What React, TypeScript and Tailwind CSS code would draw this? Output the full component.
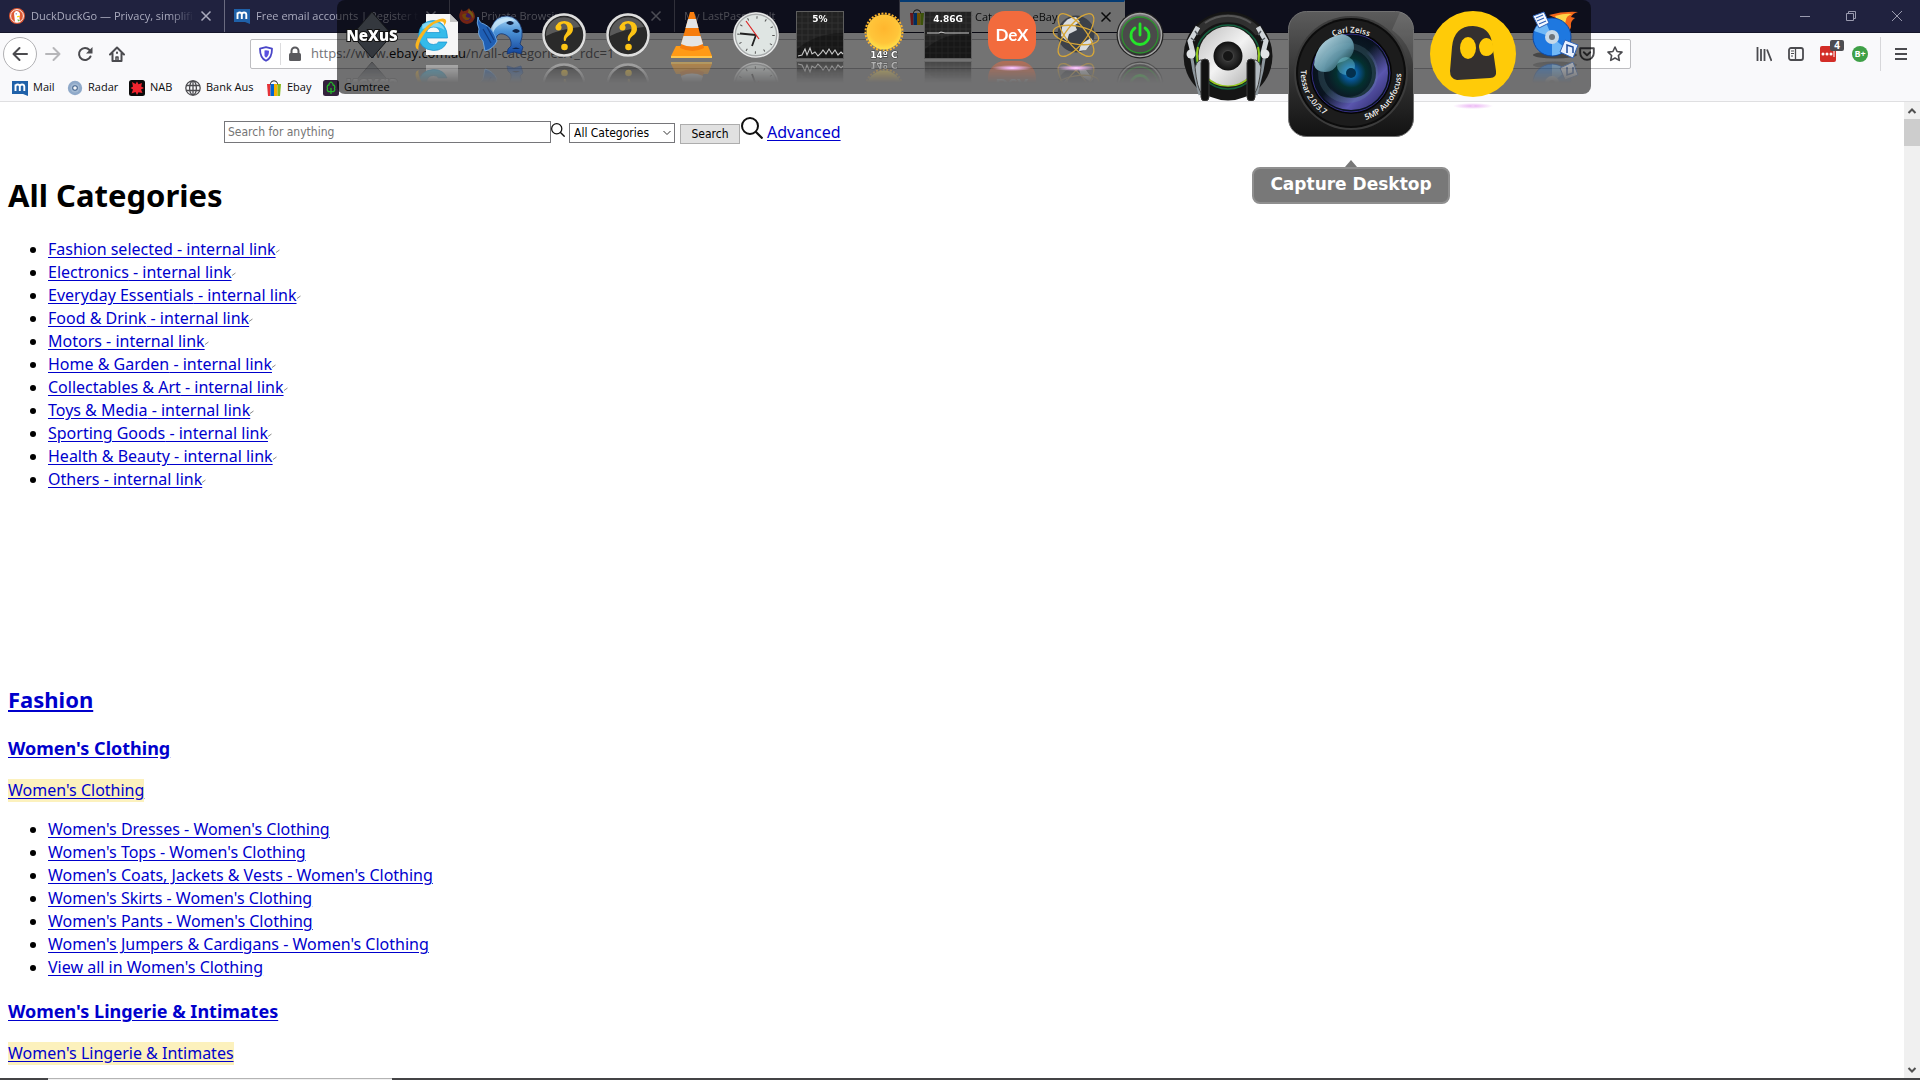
import React from 'react';
import clsx from 'clsx';

interface IconProps {
  className?: string;
}

/* ---------- Site icons ---------- */

const DuckIcon: React.FC<IconProps> = ({ className }) => (
  <svg viewBox="0 0 16 16" className={className}>
    <circle cx="8" cy="8" r="8" fill="#de5833" />
    <circle cx="8" cy="8" r="6.4" fill="none" stroke="#fff" strokeWidth="0.9" />
    <path d="M6 14L5 5.500Q5.500 2.500 8 3q3 .5 3 3.500l-.5 3 .5 4.500z" fill="#fff" />
    <path d="M8 8.200q2-.8 3.500 0-1.500 1.300-3.500 1z" fill="#fdd20a" />
    <path d="M8.500 11l2.500 1.500-2 1z" fill="#65bc46" />
    <circle cx="7.200" cy="5.800" r=".6" fill="#2d4f8e" />
  </svg>
);

const MailIcon: React.FC<IconProps> = ({ className }) => (
  <svg viewBox="0 0 16 16" className={className}>
    <path d="M0 1l16 0v15l-5-2H0z" fill="#1f61a9" />
    <path d="M3.500 11V4.500M3.500 6.500q.2-2 2.200-2t2.100 2V11M7.800 6.500q.2-2 2.300-2t2.200 2V11" fill="none" stroke="#fff" strokeWidth="1.900" />
  </svg>
);

const FirefoxIcon: React.FC<IconProps> = ({ className }) => (
  <svg viewBox="0 0 16 16" className={className}>
    <path d="M8 16A8 8 0 0 1 1.200 4.200Q1.800 2 3 1.200q0 1.500 1 2.200 1.500-1 3-.6Q8.500 1.500 10 .2q.3 1.800 2.500 3.300Q13 3 13 2q3 3 3 6.500A8 8 0 0 1 8 16z" fill="#ff4f2e" />
    <path d="M10 .2q.3 1.800 2.500 3.500 3 2.500 1.500 7-2-5-5-6z" fill="#ffc928" />
    <circle cx="8" cy="9" r="3.800" fill="#8339c9" />
    <path d="M3 7q2-2.200 5-1.200L6.500 8q1 2.500 5 1.500-2 3.500-5.500 2.500Q3.500 10.500 3 7z" fill="#ff980e" />
  </svg>
);

const EbayIcon: React.FC<IconProps> = ({ className }) => (
  <svg viewBox="0 0 16 16" className={className}>
    <path d="M4.500 5V3.500Q5 .8 8 .8t3.500 2.700V5" fill="none" stroke="#222" />
    <path d="M1 4h3.500v12H2z" fill="#e53238" />
    <path d="M4.500 4H8v12H4.500z" fill="#0064d2" />
    <path d="M8 4h3.500v12H8z" fill="#f5af02" />
    <path d="M11.500 4H15l-1 12h-2.500z" fill="#86b817" />
  </svg>
);

const RadarIcon: React.FC<IconProps> = ({ className }) => (
  <svg viewBox="0 0 16 16" className={className}>
    <circle cx="8" cy="8" r="7.200" fill="#8fa9c9" />
    <circle cx="8" cy="8" r="4.500" fill="#a4bad3" />
    <circle cx="8" cy="8" r="2.800" fill="#44658f" />
    <circle cx="8" cy="8" r="1.800" fill="#f4f6f8" />
  </svg>
);

const NabIcon: React.FC<IconProps> = ({ className }) => (
  <svg viewBox="0 0 16 16" className={className}>
    <rect width="16" height="16" rx="2.500" fill="#0b0b0b" />
    <path d="M3 2l3.500 2L8 1.500l1.500 2.800L13 3l-.8 3.500L15 8l-3 1.500 1.500 3.500-4-.8L8 15l-1.500-3-4 1.500L4 9.500 1.500 8 4 6.500z" fill="#f0242e" />
  </svg>
);

const GlobeIcon: React.FC<IconProps> = ({ className }) => (
  <svg viewBox="0 0 16 16" className={className} fill="none" stroke="#4c4c50" strokeWidth="1.300">
    <circle cx="8" cy="8" r="7.200" />
    <ellipse cx="8" cy="8" rx="3.400" ry="7.200" />
    <path d="M1 5.500h14M1 10.500h14M8 1v14" />
  </svg>
);

const GumtreeIcon: React.FC<IconProps> = ({ className }) => (
  <svg viewBox="0 0 16 16" className={className}>
    <rect width="16" height="16" rx="2.500" fill="#33213c" />
    <path d="M8 14V8M8 11.500c-3 .8-4.500-1-3.500-3C3.500 6 5 5 5.800 5 6 3 8 2 8 2s2 1 2.200 3c.8 0 2.300 1 1.300 3.500 1 2-.5 3.800-3.500 3z" fill="none" stroke="#24b528" strokeWidth="1.300" />
  </svg>
);

/* ---------- Toolbar icons ---------- */

const CloseIcon: React.FC<IconProps> = ({ className }) => (
  <svg viewBox="0 0 12 12" className={className}>
    <path d="M1.500 1.500l9 9M10.500 1.500l-9 9" fill="none" stroke="currentColor" strokeWidth="1.500" />
  </svg>
);

const ArrowIcon: React.FC<IconProps> = ({ className }) => (
  <svg viewBox="0 0 16 16" className={className} fill="none" stroke="currentColor" strokeWidth="2" strokeLinecap="round" strokeLinejoin="round">
    <path d="M15 8H1.500M7.500 2L1.500 8l6 6" />
  </svg>
);

const ReloadIcon: React.FC<IconProps> = ({ className }) => (
  <svg viewBox="0 0 16 16" className={className}>
    <path d="M13.500 10.500A6 6 0 1 1 12.500 4" fill="none" stroke="currentColor" strokeWidth="2" strokeLinecap="round" />
    <path d="M15.500 1v6.500H9z" fill="currentColor" />
  </svg>
);

const HomeIcon: React.FC<IconProps> = ({ className }) => (
  <svg viewBox="0 0 16 16" className={className} fill="none" stroke="currentColor" strokeWidth="2" strokeLinejoin="round" strokeLinecap="round">
    <path d="M1 8.500L8 1.500l7 7M3.500 7.500V15h9V7.500" />
    <path d="M7 15v-4h2v4" strokeWidth="1.500" />
    <path d="M8 6.500v.5" />
  </svg>
);

const ShieldIcon: React.FC<IconProps> = ({ className }) => (
  <svg viewBox="0 0 16 16" className={className}>
    <path d="M8 1.200l6 1.500c0 6-1 9.800-6 12.100C3 12.500 2 8.700 2 2.700z" fill="none" stroke="#4a46c8" strokeWidth="1.800" strokeLinejoin="round" />
    <path d="M8 4.200l3 .6c0 3.600-.8 5.700-3 7z" fill="#5a4fe0" />
    <path d="M8 4.200l-1.500.4V10L8 11.800z" fill="#5a4fe0" />
  </svg>
);

const LockIcon: React.FC<IconProps> = ({ className }) => (
  <svg viewBox="0 0 16 16" className={className}>
    <path d="M4.500 8V5a3.500 3.500 0 0 1 7 0v3" fill="none" stroke="#5a5a5e" strokeWidth="2" />
    <rect x="2" y="7" width="12" height="8" rx="1.500" fill="#5a5a5e" />
  </svg>
);

const PocketIcon: React.FC<IconProps> = ({ className }) => (
  <svg viewBox="0 0 16 16" className={className} fill="none" stroke="currentColor" strokeWidth="1.900" strokeLinecap="round" strokeLinejoin="round">
    <path d="M1.200 2.200h13.600V7a6.800 6.800 0 0 1-13.600 0z" />
    <path d="M4.800 6.200L8 9.200l3.200-3" />
  </svg>
);

const StarIcon: React.FC<IconProps> = ({ className }) => (
  <svg viewBox="0 0 16 16" className={className}>
    <path d="M8 1l2.100 4.500 4.900.6-3.600 3.400.9 4.900L8 12l-4.300 2.400.9-4.900L1 6.100l4.900-.6z" fill="none" stroke="currentColor" strokeWidth="1.600" strokeLinejoin="round" />
  </svg>
);

const LibraryIcon: React.FC<IconProps> = ({ className }) => (
  <svg viewBox="0 0 16 16" className={className} fill="none" stroke="currentColor" strokeWidth="1.800">
    <path d="M1.500 1v14M5 3v12M8.500 3v12M11 3.500L15.500 15" />
  </svg>
);

const SidebarIcon: React.FC<IconProps> = ({ className }) => (
  <svg viewBox="0 0 16 16" className={className} fill="none" stroke="currentColor">
    <rect x="1" y="2" width="14" height="12" rx="2" strokeWidth="1.800" />
    <path d="M7.500 2v12" strokeWidth="1.300" />
    <path d="M3 5h3M3 7.500h3M3 10h2" />
  </svg>
);

const MenuIcon: React.FC<IconProps> = ({ className }) => (
  <svg viewBox="0 0 16 16" className={className} fill="none" stroke="currentColor" strokeWidth="2">
    <path d="M2 3h12M2 8h12M2 13h12" />
  </svg>
);

const MagnifierIcon: React.FC<IconProps> = ({ className }) => (
  <svg viewBox="0 0 22 22" className={className} fill="none" stroke="#111">
    <circle cx="9" cy="9" r="8" strokeWidth="2" />
    <path d="M14.500 14.500l7 7" strokeWidth="2.200" />
  </svg>
);

/* ---------- Dock icons ---------- */

const NexusDock: React.FC<IconProps> = ({ className }) => (
  <svg viewBox="0 0 52 48" className={className}>
    <path d="M26 1l20 23-20 23L6 24z" fill="#34383e" stroke="#15171a" />
    <text x="26" y="30" textAnchor="middle" fontFamily="Open Sans, sans-serif" fontWeight="800" fontSize="15" fill="#fff" stroke="#111" strokeWidth="2" paintOrder="stroke">NeXuS</text>
  </svg>
);

const ExplorerDock: React.FC<IconProps> = ({ className }) => (
  <svg viewBox="0 0 48 48" className={className}>
    <path d="M14 3h24l8 8v33H14z" fill="#f6f6f6" />
    <path d="M38 3v8h8z" fill="#c4c4c4" />
    <path d="M35.500 27H14.500q1 6.500 7 6.500 3.500 0 5-2.500H35q-3.500 8.500-13.500 8.500Q7 38.500 6.500 24.500 7.500 10 21.500 9.500 35 10.500 35.500 27zM28 21.500q-1-5.500-6.500-5.500t-7 5.500z" fill="#35bbea" stroke="#1391cf" strokeWidth=".7" />
    <path d="M10 13q6-2 11.500-2 9 .5 11 8-9-6-22-1z" fill="#b5e9fa" opacity=".6" />
    <path d="M7 39q-7-2 0-14Q17 9 31 7.500q6 1 1 7.500 1-5-3.500-4.500Q17 13 9 28q-4 9-2 11z" fill="#fbb51c" />
  </svg>
);

const BirdDock: React.FC<IconProps> = ({ className }) => (
  <svg viewBox="0 0 48 48" className={className}>
    <defs>
      <linearGradient id="bird" x1="0" y1="0" x2="0" y2="1">
        <stop offset="0" stopColor="#b4dcf7" />
        <stop offset=".4" stopColor="#4d94d8" />
        <stop offset="1" stopColor="#12439a" />
      </linearGradient>
    </defs>
    <path d="M16 16Q19 5 31 5q12 1 15 14 1 7-2 14l3 3-2 7-7-2-7 2 1-5 3-3q1-8-5-11-6-3-9 1l-2 5q-4-6-3-14z" fill="url(#bird)" stroke="#17366f" strokeWidth=".8" />
    <path d="M14 20q3-12 16-13 6 0 9 3-8-1-14 3-6 3-8 9z" fill="#d6eefc" opacity=".7" />
    <path d="M2 6q1 6 6 7 9 4 13 17-4 8-12 10Q8 35 7 30 1 24 3 18 0 12 2 6z" fill="#1f5fb4" stroke="#6fa9e4" strokeWidth=".9" />
    <path d="M7 18l8 14M11 16l7 13" stroke="#123c80" strokeWidth="1.200" />
    <path d="M30 12q4-4 8 0-3 4-8 0zM36 20q4-4 8 0-3 4-8 0zM36 38q4-3 8 0" fill="#0f2347" />
  </svg>
);

const QuestionDock: React.FC<IconProps> = ({ className }) => (
  <svg viewBox="0 0 48 48" className={className}>
    <circle cx="24" cy="24" r="22" fill="#555" />
    <circle cx="24" cy="24" r="20.500" fill="#2a2a2a" stroke="#dedede" strokeWidth="2.500" />
    <path d="M6 25A18 18 0 0 1 40 16Q20 18 6 25z" fill="#5a5a5a" />
    <circle cx="18.500" cy="16.500" r="3" fill="#fdc414" />
    <path d="M16 16q1-6 8.500-6 8.500.5 8.500 8 0 4-4.500 7-3 2-3 5h-1.500q-1-4 1.500-7 2.500-2.500 2-6-.5-4.500-4-4.500-3 .5-4.500 4z" fill="#fdc414" />
    <circle cx="24.500" cy="36" r="3.300" fill="#fdc414" />
  </svg>
);

const ConeDock: React.FC<IconProps> = ({ className }) => (
  <svg viewBox="0 0 48 48" className={className}>
    <path d="M8 35h32l4 10v2H3v-2z" fill="#ff9a16" />
    <path d="M3 45h41v2H3z" fill="#ffc54a" />
    <path d="M22 1h4l10 36q-11 6-24 0z" fill="#f77d0d" />
    <path d="M20 8h8l2.500 9h-13zM15.500 25h17l2.500 8q-11 5-22 0z" fill="#e4e4e4" />
  </svg>
);

const ClockDock: React.FC<IconProps> = ({ className }) => (
  <svg viewBox="0 0 48 48" className={className}>
    <circle cx="24" cy="24" r="21.500" fill="#dfe5e3" stroke="#a7aaab" strokeWidth="3" />
    <circle cx="24" cy="24" r="22" fill="none" stroke="#f2f2f2" strokeWidth="1.200" />
    <circle cx="24" cy="24" r="17.500" fill="none" stroke="#555" strokeWidth="2.500" strokeDasharray="1 8.163" />
    <path d="M24 24L8 22.500M24 24l-4 11" stroke="#222" strokeWidth="1.800" />
    <path d="M27 28L14 10" stroke="#d22" strokeWidth="1.200" />
  </svg>
);

interface MeterProps extends IconProps {
  value: string;
  line: string;
}

const MeterDock: React.FC<MeterProps> = ({ className, value, line }) => (
  <svg viewBox="0 0 48 48" className={className}>
    <rect x=".5" y=".5" width="47" height="47" fill="#222" stroke="#5e5e5e" />
    <path d="M6 1v46M12 1v46M18 1v46M24 1v46M30 1v46M36 1v46M42 1v46M1 6h46M1 12h46M1 18h46M1 24h46M1 30h46M1 36h46M1 42h46" stroke="#383838" strokeWidth=".7" />
    <path d="M1 38Q20 22 47 22v25H1z" fill="#000" opacity=".3" />
    <path d={line} fill="none" stroke="#c8c8c8" strokeWidth="1.100" />
    <text x="24" y="11" textAnchor="middle" fontFamily="DejaVu Sans, sans-serif" fontWeight="700" fontSize="9" fill="#fff">{value}</text>
  </svg>
);

const WeatherDock: React.FC<IconProps> = ({ className }) => (
  <svg viewBox="0 0 48 48" className={className}>
    <defs>
      <radialGradient id="sun" cx=".5" cy=".4" r=".6">
        <stop offset="0" stopColor="#ffb62e" />
        <stop offset=".7" stopColor="#ffc53a" />
        <stop offset="1" stopColor="#ffe14b" />
      </radialGradient>
    </defs>
    <circle cx="24" cy="21" r="18.500" fill="none" stroke="#ffb52b" strokeWidth="2" strokeDasharray="2 1.500" />
    <circle cx="24" cy="21" r="17.500" fill="url(#sun)" />
    <text x="24" y="47" textAnchor="middle" fontFamily="DejaVu Sans, sans-serif" fontWeight="700" fontSize="9" fill="#fff" stroke="#333" strokeWidth="1" paintOrder="stroke">14º C</text>
  </svg>
);

const DexDock: React.FC<IconProps> = ({ className }) => (
  <svg viewBox="0 0 48 48" className={className}>
    <rect width="48" height="48" rx="17" fill="#f26b3d" />
    <text x="24" y="30" textAnchor="middle" fontFamily="Lato, sans-serif" fontWeight="700" fontSize="17" fill="#fff">DeX</text>
  </svg>
);

const GlobeDock: React.FC<IconProps> = ({ className }) => (
  <svg viewBox="0 0 48 48" className={className}>
    <circle cx="24" cy="23" r="18.500" fill="#3c4149" />
    <path d="M10 16Q14 6 24 6l4 5-5 3 2 5-8 4-2 7-6-5zM29 33l10-6 2 3-7 9-7 1z" fill="#dadde0" />
    <g fill="none" stroke="#d6a638" strokeWidth="1.300">
      <ellipse cx="24" cy="24" rx="23" ry="9" transform="rotate(10 24 24)" />
      <ellipse cx="24" cy="24" rx="26" ry="10" transform="rotate(52 24 24)" />
      <ellipse cx="24" cy="24" rx="26" ry="10" transform="rotate(128 24 24)" />
    </g>
  </svg>
);

const PowerDock: React.FC<IconProps> = ({ className }) => (
  <svg viewBox="0 0 48 48" className={className}>
    <defs>
      <linearGradient id="power" x1="0" y1="0" x2="0" y2="1">
        <stop offset="0" stopColor="#777" />
        <stop offset="1" stopColor="#2d2d2d" />
      </linearGradient>
    </defs>
    <circle cx="24" cy="24" r="23.500" fill="#222" />
    <circle cx="24" cy="24" r="21.500" fill="url(#power)" stroke="#a5a5a5" strokeWidth="1.500" />
    <circle cx="24" cy="24" r="18" fill="#4a4a4a" stroke="#2b8f2d" strokeWidth="1.300" />
    <path d="M19 17a9 9 0 1 0 10 0M24 13v11" fill="none" stroke="#24e52a" strokeWidth="2.800" strokeLinecap="round" />
  </svg>
);

const HeadphonesDock: React.FC<IconProps> = ({ className }) => (
  <svg viewBox="0 0 90 90" className={className}>
    <defs>
      <linearGradient id="cone" x1="0" y1="0" x2="1" y2="1">
        <stop offset="0" stopColor="#bdbdbd" />
        <stop offset=".5" stopColor="#f3f3f3" />
        <stop offset="1" stopColor="#a9a9a9" />
      </linearGradient>
      <radialGradient id="coneHub">
        <stop offset="0" stopColor="#0a0a0a" />
        <stop offset=".3" stopColor="#3b3b3b" />
        <stop offset="1" stopColor="#101010" />
      </radialGradient>
    </defs>
    <circle cx="45" cy="45" r="44.500" fill="#151515" />
    <path d="M14 22a40 40 0 0 1 62 0" fill="none" stroke="#303030" strokeWidth="8" />
    <path d="M22 12a40 40 0 0 1 46 0" fill="none" stroke="#555" strokeWidth="2" />
    <circle cx="45" cy="46" r="32" fill="#191b17" stroke="#14603f" strokeWidth="1.500" />
    <path d="M15 36a31 31 0 1 0 60 0" fill="none" stroke="#95c81e" strokeWidth="2" />
    <circle cx="45" cy="45" r="29.500" fill="url(#cone)" />
    <circle cx="45" cy="45" r="14.500" fill="url(#coneHub)" />
    <circle cx="45" cy="45" r="5.500" fill="#161616" stroke="#444" />
    <path d="M15 16L7 30l3 12M75 16l8 14-3 12" fill="none" stroke="#d0d5d9" strokeWidth="5" />
    <path d="M12 20l3 4M8 27l4 3M78 20l-3 4M82 27l-4 3" stroke="#555b60" strokeWidth="1.500" />
    <path d="M8 42l3 18 6 24M82 42l-3 18-6 24" fill="none" stroke="#8d979e" strokeWidth="3" />
    <circle cx="8" cy="43" r="4.500" fill="#e0e3e5" />
    <circle cx="82" cy="43" r="4.500" fill="#e0e3e5" />
    <path d="M12 56q3-8 7-7v34q-5-5-7-27zM78 56q-3-8-7-7v34q5-5 7-27z" fill="#b3bbc1" stroke="#444" />
    <rect x="18" y="48" width="8" height="42" rx="4" fill="#111" stroke="#3a3a3a" />
    <rect x="64" y="48" width="8" height="42" rx="4" fill="#111" stroke="#3a3a3a" />
  </svg>
);

const CameraDock: React.FC<IconProps> = ({ className }) => (
  <svg viewBox="0 0 126 126" className={className}>
    <defs>
      <linearGradient id="body" x1="0" y1="0" x2="0" y2="1">
        <stop offset="0" stopColor="#5c5c5c" />
        <stop offset=".5" stopColor="#343434" />
        <stop offset="1" stopColor="#121212" />
      </linearGradient>
      <radialGradient id="lens" cx=".5" cy=".5" r=".5">
        <stop offset="0" stopColor="#1591d2" />
        <stop offset=".2" stopColor="#07508a" />
        <stop offset=".38" stopColor="#04302f" />
        <stop offset=".6" stopColor="#0b1c26" />
        <stop offset="1" stopColor="#08101c" />
      </radialGradient>
      <linearGradient id="violet" x1="0" y1="0" x2="1" y2="1">
        <stop offset=".45" stopColor="#5a56ae" stopOpacity="0" />
        <stop offset=".75" stopColor="#5a56ae" />
        <stop offset="1" stopColor="#322f70" />
      </linearGradient>
      <linearGradient id="shine" x1="0" y1="0" x2="1" y2="1">
        <stop offset="0" stopColor="#d4edf4" />
        <stop offset=".6" stopColor="#6ba4b7" stopOpacity=".85" />
        <stop offset="1" stopColor="#2a5a63" stopOpacity=".2" />
      </linearGradient>
      <path id="arcTop" d="M22.500 62A40.500 40.500 0 0 1 103.500 62" />
      <path id="arcLeft" d="M13 56A50 50 0 0 0 52 110" />
      <path id="arcRight" d="M74 110A50 50 0 0 0 113 56" />
    </defs>
    <rect x=".5" y=".5" width="125" height="125" rx="18" fill="url(#body)" stroke="#707070" />
    <path d="M112 1q13 2 13 18v34q-4-22-21-34z" fill="#fff" opacity=".1" />
    <circle cx="63" cy="62" r="57" fill="#3c3c3c" />
    <circle cx="63" cy="62" r="55" fill="#0c0c0c" />
    <circle cx="63" cy="62" r="53" fill="#1c1c1c" />
    <circle cx="63" cy="62" r="41" fill="#050505" />
    <circle cx="63" cy="62" r="39" fill="url(#lens)" stroke="#332e82" />
    <circle cx="63" cy="62" r="31" fill="none" stroke="url(#violet)" strokeWidth="12" />
    <circle cx="60" cy="62" r="27" fill="none" stroke="#6f9fb0" strokeWidth="6" opacity=".2" />
    <path d="M26 54Q28 28 54 23q12 2 12 14-1 12-16 15-4 9-13 9-9 0-11-7z" fill="url(#shine)" />
    <circle cx="58" cy="55" r="9" fill="#7bd6e3" opacity=".4" />
    <circle cx="63" cy="62" r="5" fill="#04304e" />
    <g fontFamily="Open Sans, sans-serif" fontWeight="600" fontSize="8" fill="#f1f1f1">
      <text>
        <textPath href="#arcTop" startOffset="50%" textAnchor="middle">Carl Zeiss</textPath>
      </text>
      <text>
        <textPath href="#arcLeft" startOffset="3">Tessar 2.0/3.7</textPath>
      </text>
      <text>
        <textPath href="#arcRight" startOffset="4">5MP Autofocuss</textPath>
      </text>
    </g>
  </svg>
);

const GhostDock: React.FC<IconProps> = ({ className }) => (
  <svg viewBox="0 0 86 86" className={className}>
    <circle cx="43" cy="43" r="43" fill="#ffcb08" />
    <path d="M22 36Q24 15 43 15q17 1 19 17l4 28q1 7-6 7l-33 2q-7-1-7-9z" fill="#34302f" />
    <ellipse cx="38" cy="37" rx="8" ry="11" fill="#ffcb08" />
    <path d="M62 30q-4-5-9-2-4 3-4 8 1 9 7 9t8-6z" fill="#ffcb08" />
  </svg>
);

const DiscDock: React.FC<IconProps> = ({ className }) => (
  <svg viewBox="0 0 48 48" className={className}>
    <ellipse cx="24" cy="44" rx="22" ry="3.500" fill="#333" opacity=".7" />
    <path d="M18 4Q32 0 47 1q-5 1-7 5l4 1q-5 3-4 9l-3 8-8-15z" fill="#f3661a" />
    <path d="M24 5q10-3 17-2-6 2-6 6l-2 7-6-6z" fill="#ffd449" />
    <circle cx="21" cy="26" r="19" fill="#1e78e0" stroke="#0e48a3" />
    <path d="M21 26L3 20A19 19 0 0 1 14 9zM21 26l14 12a19 19 0 0 1-14 6.500z" fill="#86c8fb" opacity=".8" />
    <circle cx="21" cy="26" r="7" fill="#c7d9e8" />
    <circle cx="21" cy="26" r="3" fill="#6d747b" />
    <path d="M2 5l11-4 5 11-10 5z" fill="#f4f8ff" stroke="#2f63b8" />
    <path d="M5 7l7-3M6 10l7-3M8 13l7-3" stroke="#2f63b8" strokeWidth="1.200" />
    <path d="M34 29l13 5-5 13-13-6z" fill="#e9f1fd" stroke="#2f63b8" />
    <path d="M36 42v-8l6 2v6" fill="none" stroke="#1b4b9e" strokeWidth="1.500" />
  </svg>
);

/* ---------- Data ---------- */

const tabs = [
  { title: 'DuckDuckGo — Privacy, simplifi', Icon: DuckIcon, closable: true },
  { title: 'Free email accounts | Register t', Icon: MailIcon, closable: true },
  { title: 'Private Browsing', Icon: FirefoxIcon, closable: true },
  { title: 'My LastPass Vault', Icon: null, closable: false },
  { title: 'Shop by Category | eBay', Icon: EbayIcon, closable: true, active: true },
];

const bookmarks = [
  { label: 'Mail', Icon: MailIcon, width: 'w-[55px]' },
  { label: 'Radar', Icon: RadarIcon, width: 'w-[62px]' },
  { label: 'NAB', Icon: NabIcon, width: 'w-[56px]' },
  { label: 'Bank Aus', Icon: GlobeIcon, width: 'w-[81px]' },
  { label: 'Ebay', Icon: EbayIcon, width: 'w-[57px]' },
  { label: 'Gumtree', Icon: GumtreeIcon, width: 'w-[70px]' },
];

const categories = [
  'Fashion selected',
  'Electronics',
  'Everyday Essentials',
  'Food & Drink',
  'Motors',
  'Home & Garden',
  'Collectables & Art',
  'Toys & Media',
  'Sporting Goods',
  'Health & Beauty',
  'Others',
];

const clothing = [
  "Women's Dresses - Women's Clothing",
  "Women's Tops - Women's Clothing",
  "Women's Coats, Jackets & Vests - Women's Clothing",
  "Women's Skirts - Women's Clothing",
  "Women's Pants - Women's Clothing",
  "Women's Jumpers & Cardigans - Women's Clothing",
  "View all in Women's Clothing",
];

const cpuLine = 'M2 45l4-1 3-6 2 6 3-7 2 6 3-2 3 4 3-3 2-3 3 4 3-5 3 5 3-4 3 5 3-3 2 2';
const memoryLine = 'M3 22h12l2-1 4 1h24';

const smallDock = [
  { name: 'Nexus', icon: <NexusDock className="w-[52px] h-12" /> },
  { name: 'Internet Explorer', icon: <ExplorerDock className="size-12" /> },
  { name: 'Thunderbird', icon: <BirdDock className="size-12" /> },
  { name: 'Help', icon: <QuestionDock className="size-12" /> },
  { name: 'Support', icon: <QuestionDock className="size-12" /> },
  { name: 'VLC', icon: <ConeDock className="size-12" /> },
  { name: 'Clock', icon: <ClockDock className="size-12" /> },
  { name: 'Processor', icon: <MeterDock className="size-12" value="5%" line={cpuLine} /> },
  { name: 'Weather', icon: <WeatherDock className="size-12" /> },
  { name: 'Memory', icon: <MeterDock className="size-12" value="4.86G" line={memoryLine} /> },
  { name: 'DeX', icon: <DexDock className="size-12" />, running: true },
  { name: 'Network', icon: <GlobeDock className="size-12" />, running: true },
  { name: 'Power', icon: <PowerDock className="size-12" /> },
];

/* ---------- Browser ---------- */

const TabBar: React.FC = () => (
  <div className="flex h-[33px] shrink-0 bg-[#20223f] border-b border-[#15162b] text-[11px] text-[#a9aabd]">
    {tabs.map(({ title, Icon, closable, active }) => (
      <div
        key={title}
        className={clsx(
          'flex items-center w-[225px] pl-[9px] pr-3 gap-1.5 border-r',
          active ? 'bg-[#f5f6f7] text-[#18191a] border-transparent border-t-2 border-t-[#0a84ff]' : 'border-[#6a6b80]',
        )}
      >
        {Icon && <Icon className="size-4 shrink-0" />}
        <span className="flex-1 overflow-hidden whitespace-nowrap [mask-image:linear-gradient(to_right,#000_85%,transparent)]">{title}</span>
        {closable && (
          <button type="button" aria-label={`Close ${title}`}>
            <CloseIcon className="size-3" />
          </button>
        )}
      </div>
    ))}
    <div className="flex ml-auto text-[#9a9baf]">
      <button type="button" aria-label="Minimise" className="flex items-center justify-center w-[46px]">
        <svg viewBox="0 0 10 10" className="size-2.5"><path d="M0 5.500h10" stroke="currentColor" /></svg>
      </button>
      <button type="button" aria-label="Restore" className="flex items-center justify-center w-[46px]">
        <svg viewBox="0 0 10 10" className="size-2.5" fill="none" stroke="currentColor"><path d="M.5 2.500h7v7h-7zM2.500 2.500v-2h7v7h-2" /></svg>
      </button>
      <button type="button" aria-label="Close window" className="flex items-center justify-center w-[46px]">
        <svg viewBox="0 0 10 10" className="size-2.5" stroke="currentColor"><path d="M0 0l10 10M10 0L0 10" /></svg>
      </button>
    </div>
  </div>
);

const NavBar: React.FC = () => (
  <div className="flex items-center h-[41px] shrink-0 text-[#4b4b4f]">
    <div className="flex items-center w-[250px] pl-[3px]">
      <button type="button" aria-label="Back" className="flex items-center justify-center size-[34px] rounded-full border border-[#b1b1b4] bg-white">
        <ArrowIcon className="size-4" />
      </button>
      <button type="button" aria-label="Forward" className="flex justify-center w-8 text-[#b6b6b9]">
        <ArrowIcon className="size-4 rotate-180" />
      </button>
      <button type="button" aria-label="Reload" className="flex justify-center w-8">
        <ReloadIcon className="size-4" />
      </button>
      <button type="button" aria-label="Home" className="flex justify-center w-8">
        <HomeIcon className="size-4" />
      </button>
    </div>
    <div className="flex flex-1 items-center h-[30px] px-[7px] bg-white border border-[#bdbdc0] rounded-xs">
      <ShieldIcon className="size-4" />
      <span className="h-[22px] mx-1.5 border-l border-[#dcdcde]" />
      <LockIcon className="size-4" />
      <div className="flex-1 pl-2 text-[13px] whitespace-nowrap text-[#737377]">
        https://www.<span className="text-[#0c0c0d]">ebay.com.au</span>/n/all-categories/?_rdc=1
      </div>
      <button type="button" aria-label="Save to Pocket"><PocketIcon className="size-4" /></button>
      <button type="button" aria-label="Bookmark this page" className="ml-3"><StarIcon className="size-4" /></button>
    </div>
    <div className="flex items-center gap-4 w-[289px] pr-[11px] justify-end">
      <button type="button" aria-label="Library"><LibraryIcon className="size-4" /></button>
      <button type="button" aria-label="Sidebars"><SidebarIcon className="size-4" /></button>
      <button type="button" aria-label="LastPass" className="relative flex items-center justify-center size-4 rounded-xs bg-[#d32d27]">
        <svg viewBox="0 0 16 16" className="size-4" fill="#fff">
          <circle cx="3" cy="8" r="1.500" />
          <circle cx="7" cy="8" r="1.500" />
          <circle cx="11" cy="8" r="1.500" />
          <path d="M13.500 5h1v6h-1z" />
        </svg>
        <span className="absolute -top-1.5 left-2.5 w-3.5 h-[11px] rounded-xs bg-[#4d4d51] text-white text-[10px] leading-[11px] font-bold">4</span>
      </button>
      <button type="button" aria-label="B plus" className="flex items-center justify-center size-4 rounded-full bg-[#3fa047] text-white text-[9px] leading-4 font-bold">B+</button>
      <span className="h-[34px] -ml-1 border-l border-[#d7d7da]" />
      <button type="button" aria-label="Open menu" className="-ml-1"><MenuIcon className="size-4" /></button>
    </div>
  </div>
);

const BookmarksBar: React.FC = () => (
  <nav className="flex items-center h-7 shrink-0 pl-3 border-b border-[#dfdfe1] text-[11px] text-[#0c0c0d]">
    {bookmarks.map(({ label, Icon, width }) => (
      <a key={label} href="#" className={clsx('flex items-center gap-[5px] whitespace-nowrap', width)}>
        <Icon className="size-4 shrink-0" />
        {label}
      </a>
    ))}
  </nav>
);

const SearchForm: React.FC = () => (
  <form className="flex items-end h-7 ml-[216px] font-['Tahoma','DejaVu_Sans_Condensed','DejaVu_Sans',sans-serif] text-xs text-black">
    <input
      type="text"
      aria-label="Search for anything"
      placeholder="Search for anything"
      className="w-[327px] h-[22px] mb-0.5 px-[3px] border border-[#76767a] bg-white placeholder:text-[#757575]"
    />
    <MagnifierIcon className="size-3.5 mb-2" />
    <div className="relative flex ml-1 mb-0.5">
      <select aria-label="Category" className="appearance-none w-[106px] h-5 pl-1 border border-[#76767a] bg-white">
        <option>All Categories</option>
      </select>
      <svg viewBox="0 0 8 8" className="absolute right-1 top-1.5 size-2" fill="none" stroke="#333"><path d="M.5 2L4 5.500 7.500 2" /></svg>
    </div>
    <button type="button" className="w-[60px] h-5 ml-[5px] mb-px border border-[#adadad] bg-[#e1e1e1]">Search</button>
    <MagnifierIcon className="size-[22px] mb-1.5 ml-px" />
    <a href="#" className="ml-1 mb-0.5 font-['Comic_Sans_MS','Noto_Sans',sans-serif] text-base leading-[22px] text-[#0000cc] underline">Advanced</a>
  </form>
);

const SectionHeading: React.FC<{ title: string }> = ({ title }) => (
  <>
    <h3 className="mt-[19px] text-lg leading-[26px] font-bold">
      <a href="#" className="underline">{title}</a>
    </h3>
    <p className="mt-[18px]">
      <a href="#" className="inline-block bg-[#fcf1bd] underline">{title}</a>
    </p>
  </>
);

const CategoryPage: React.FC = () => (
  <main className="flex-1 min-w-0 overflow-hidden px-2 pt-[15px] font-['Comic_Sans_MS','Noto_Sans',sans-serif] text-base leading-[23px] text-[#0000cc] underline-offset-2">
    <SearchForm />
    <h1 className="mt-7 text-[31px] leading-[44px] font-bold text-black">All Categories</h1>
    <ul className="mt-[21px] pl-10 list-disc marker:text-black">
      {categories.map((name) => (
        <li key={name}>
          <a href="#" className="underline">{name} - internal link</a>
          <svg viewBox="0 0 4 4" className="inline size-1" stroke="#888"><path d="M0 3.500L3.500 1" /></svg>
        </li>
      ))}
    </ul>
    <h2 className="mt-[191px] text-[22px] leading-[34px] font-bold">
      <a href="#" className="underline">Fashion</a>
    </h2>
    <SectionHeading title="Women's Clothing" />
    <ul className="mt-4 pl-10 list-disc marker:text-black">
      {clothing.map((name) => (
        <li key={name}>
          <a href="#" className="underline">{name}</a>
        </li>
      ))}
    </ul>
    <SectionHeading title="Women's Lingerie & Intimates" />
  </main>
);

const Scrollbar: React.FC = () => (
  <div className="flex flex-col w-4 shrink-0 items-center bg-[#f0f0f0]">
    <svg viewBox="0 0 16 17" className="w-4 h-[17px]" fill="none" stroke="#505050" strokeWidth="2"><path d="M4.500 11L8 7.500l3.500 3.500" /></svg>
    <div className="w-full h-[27px] bg-[#cdcdcd]" />
    <svg viewBox="0 0 16 17" className="w-4 h-[17px] mt-auto" fill="none" stroke="#505050" strokeWidth="2"><path d="M4.500 7L8 10.500 11.500 7" /></svg>
  </div>
);

/* ---------- Dock ---------- */

const Dock: React.FC = () => (
  <div className="absolute top-0 left-[337px] flex h-[94px] pt-[11px] pl-[3px] pr-2 rounded-lg bg-black/55">
    {smallDock.map(({ name, icon, running }) => (
      <button key={name} type="button" aria-label={name} className="relative flex justify-center items-start w-16">
        <span className="[-webkit-box-reflect:below_2px_linear-gradient(transparent_55%,rgba(0,0,0,0.5))]">{icon}</span>
        {running && <span className="absolute top-[54px] w-10 h-1.5 rounded-full bg-[radial-gradient(closest-side,#fff_5%,#f3b8f5_20%,transparent)]" />}
      </button>
    ))}
    <button type="button" aria-label="Headphones" className="flex justify-center items-start w-[111px]">
      <HeadphonesDock className="size-[90px]" />
    </button>
    <button type="button" aria-describedby="dock-tip" aria-label="Capture Desktop" className="relative flex justify-center items-start w-[136px]">
      <CameraDock className="size-[126px] shrink-0" />
      <span id="dock-tip" className="absolute top-[149px] flex flex-col items-center">
        <svg viewBox="0 0 12 7" className="w-3 h-[7px]"><path d="M6 0l6 7H0z" fill="#787878" /></svg>
        <span className="w-[198px] h-[37px] rounded-lg border-2 border-[#8f8f8f] bg-[#787878] text-center leading-[30px] font-['Tahoma','DejaVu_Sans',sans-serif] text-[17px] font-bold text-white whitespace-nowrap">
          Capture Desktop
        </span>
      </span>
    </button>
    <button type="button" aria-label="CyberGhost" className="relative flex justify-center items-start w-[108px]">
      <GhostDock className="size-[86px] shrink-0" />
      <span className="absolute top-[92px] w-10 h-1.5 bg-[radial-gradient(closest-side,#fff_5%,#eec0f6_20%,transparent)]" />
    </button>
    <button type="button" aria-label="Disc burner" className="flex justify-center items-start w-14">
      <span className="[-webkit-box-reflect:below_2px_linear-gradient(transparent_55%,rgba(0,0,0,0.5))]">
        <DiscDock className="size-12" />
      </span>
    </button>
  </div>
);

const App: React.FC = () => {
  return (
    <div className="relative flex flex-col h-screen overflow-hidden bg-white font-['Segoe_UI','Open_Sans',sans-serif]">
      <TabBar />
      <div className="flex flex-col shrink-0 bg-[#f9f9fb]">
        <NavBar />
        <BookmarksBar />
      </div>
      <div className="flex flex-1 min-h-0">
        <CategoryPage />
        <Scrollbar />
      </div>
      <div className="flex h-0.5 shrink-0 bg-[#444446]">
        <div className="w-[344px] ml-12 bg-[#f1f1f1] border-t border-[#b4b4b4]" />
      </div>
      <Dock />
    </div>
  );
};

export default App;
